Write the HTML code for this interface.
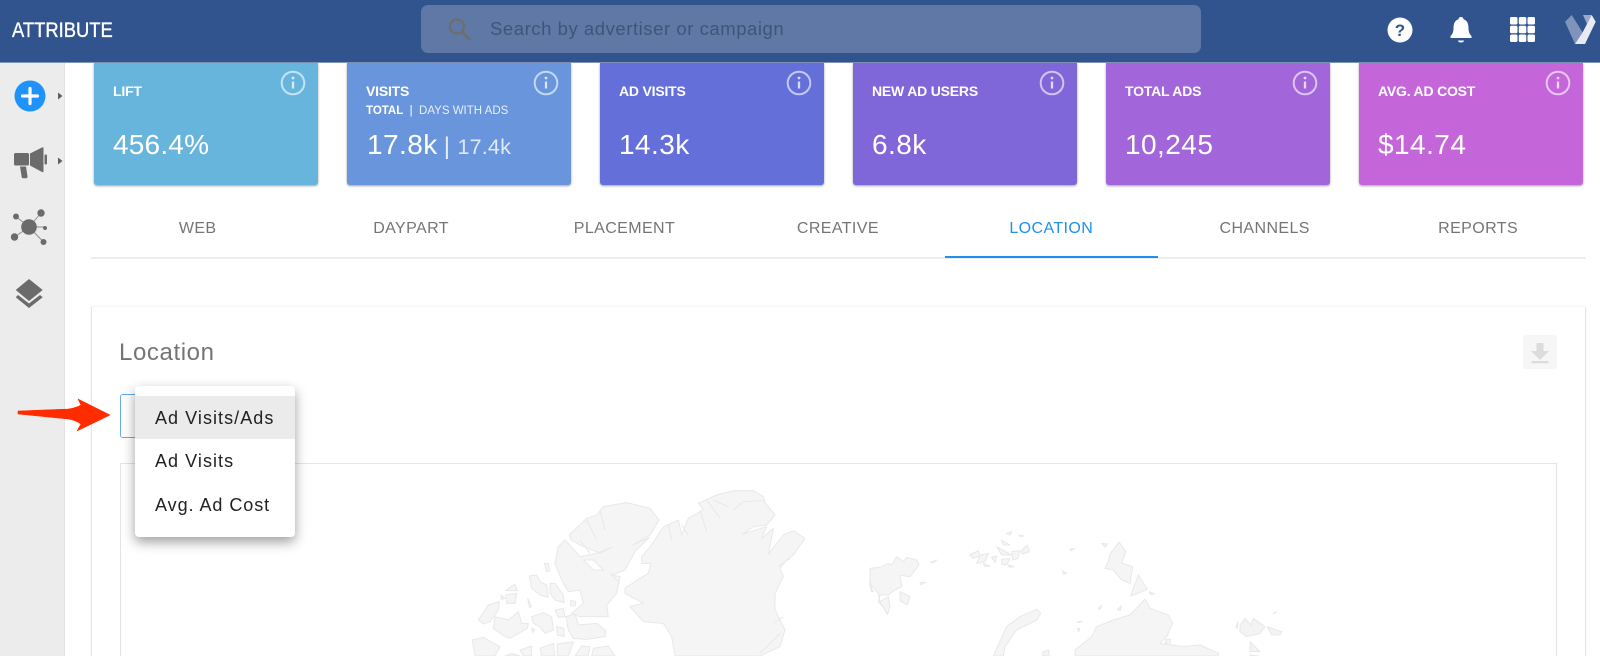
<!DOCTYPE html>
<html><head><meta charset="utf-8"><style>
*{box-sizing:border-box}
html,body{margin:0;padding:0;width:1600px;height:656px;overflow:hidden;background:#fff;font-family:"Liberation Sans",sans-serif}
.a{position:absolute}
.card{position:absolute;top:63px;width:224px;height:122px;border-radius:0 0 3px 3px;box-shadow:0 1px 2px rgba(0,0,0,.38);color:#fff}
.card .t{position:absolute;left:19px;top:20px;font-size:14px;font-weight:bold;line-height:17px;white-space:nowrap;letter-spacing:-.2px}
.card .v{position:absolute;left:19px;top:65px;font-size:28px;line-height:34px;white-space:nowrap;letter-spacing:.45px}
.card svg{position:absolute;left:186px;top:7px}
.tab{position:absolute;top:219px;width:213.4px;text-align:center;font-size:16px;line-height:20px;color:#757575;letter-spacing:.4px}
.mi{position:absolute;left:155px;font-size:18px;line-height:22px;color:#222;letter-spacing:1.05px;white-space:nowrap}
</style></head><body>
<div class="a" style="left:0;top:0;width:1600px;height:63px;background:#31548f;border-bottom:1px solid #7f95ba"></div>
<div class="a" style="left:12px;top:18px;font-size:21px;line-height:26px;color:#fff;transform:scaleX(.875);transform-origin:0 0;white-space:nowrap;-webkit-text-stroke:.35px #fff">ATTRIBUTE</div>
<div class="a" style="left:421px;top:5px;width:780px;height:48px;border-radius:7px;background:#5f78a6"></div>
<svg class="a" style="left:446px;top:16px" width="28" height="28" viewBox="0 0 28 28"><circle cx="11" cy="10.500" r="7" fill="none" stroke="#6b6f70" stroke-width="2.400"/><path d="M16 16l8 8" stroke="#6b6f70" stroke-width="2.800"/></svg>
<div class="a" style="left:490px;top:17px;font-size:18.500px;line-height:24px;color:#3f5479;letter-spacing:.55px;white-space:nowrap">Search by advertiser or campaign</div>
<svg class="a" style="left:1380px;top:10px" width="220" height="40" viewBox="1380 10 220 40">
<circle cx="1400" cy="30" r="12.500" fill="#fff"/>
<text x="1400" y="36" text-anchor="middle" font-family="Liberation Sans" font-weight="bold" font-size="17" fill="#31548f">?</text>
<path d="M1461 17c1.500 0 2.500 1 2.500 2.200 4 1.300 5 5 5 9 0 4 1.200 6 3 7.800v2h-21v-2c1.800-1.800 3-3.800 3-7.800 0-4 1-7.700 5-9 0-1.200 1-2.200 2.500-2.200z" fill="#fff"/>
<path d="M1458 40.500h6c-.3 1.500-1.500 2-3 2s-2.700-.5-3-2z" fill="#fff"/>
<g fill="#fff"><rect x="1510" y="17" width="7.500" height="7.500" rx="1.500"/><rect x="1518.800" y="17" width="7.500" height="7.500" rx="1.500"/><rect x="1527.500" y="17" width="7.500" height="7.500" rx="1.500"/><rect x="1510" y="25.800" width="7.500" height="7.500" rx="1.500"/><rect x="1518.800" y="25.800" width="7.500" height="7.500" rx="1.500"/><rect x="1527.500" y="25.800" width="7.500" height="7.500" rx="1.500"/><rect x="1510" y="34.500" width="7.500" height="7.500" rx="1.500"/><rect x="1518.800" y="34.500" width="7.500" height="7.500" rx="1.500"/><rect x="1527.500" y="34.500" width="7.500" height="7.500" rx="1.500"/></g>
<path d="M1565 21.700L1571.700 15 1583 33 1575 44z" fill="#7f93bb"/>
<path d="M1583 15h8.700l-4.700 9z" fill="#9aaacb"/>
<path d="M1582.300 33L1591.700 15 1595.700 21.700 1585 44H1575z" fill="#e8ebf4"/>
</svg>

<div class="a" style="left:0;top:63px;width:65px;height:593px;background:#ececec;border-right:1px solid #e2e2e2"></div>
<svg class="a" style="left:0;top:63px" width="65" height="260" viewBox="0 63 65 260">
<circle cx="30" cy="96" r="15.500" fill="#1e93fb"/><path d="M30 88.500v15M22.500 96h15" stroke="#fff" stroke-width="3.200" stroke-linecap="round"/>
<path d="M58 92.500l4.500 3.500-4.500 3.500zM58 157.500l4.500 3.500-4.500 3.500z" fill="#5f5f5f"/>
<g fill="#6b6b6b" transform="translate(0 1)"><rect x="14" y="152" width="15" height="12.500" rx="1.500"/><path d="M30 152.500l12-6c1-.5 1.500 0 1.500 1v22.500c0 1-.5 1.500-1.500 1l-12-6.500z"/><rect x="44.500" y="153.500" width="2.500" height="10" rx="1"/><path d="M20 165.500h6l1.500 10c.2 1-.5 1.700-1.500 1.700h-3c-.8 0-1.200-.4-1.300-1.200z"/></g>
<g stroke="#8a8a8a" stroke-width=".9"><path d="M29 227L16 216.500M29 227L41 213M29 227H45M29 227L43.500 242M29 227L14.500 237"/></g>
<g fill="#6b6b6b"><circle cx="29" cy="227" r="7.800"/><circle cx="16" cy="216.500" r="3"/><circle cx="41" cy="213" r="3.700"/><circle cx="45" cy="228" r="2"/><circle cx="43.500" cy="242" r="3"/><circle cx="14.500" cy="237" r="3.700"/>
<g transform="translate(0 1)"><path d="M29 278l13.700 11L29 300 15.700 289z"/><path d="M18 294l11 8.500L40 294l2.700 2.300L29 307 15.700 296.300z"/></g></g>
</svg>

<div class="card" style="left:94px;background:#67b5dc"><div class="t">LIFT</div><div class="v" style="letter-spacing:.2px">456.4%</div><svg width="26" height="26" viewBox="0 0 26 26"><circle cx="13" cy="13" r="11.300" fill="none" stroke="#fff" stroke-opacity=".62" stroke-width="2"/><path d="M13 11.500v7" stroke="#fff" stroke-opacity=".75" stroke-width="2.300"/><circle cx="13" cy="8" r="1.400" fill="#fff" fill-opacity=".75"/></svg></div>
<div class="card" style="left:347px;background:#6895dc"><div class="t">VISITS</div><div class="a" style="left:19px;top:41px;font-size:11.500px;line-height:14px;white-space:nowrap"><b>TOTAL</b>&nbsp; | &nbsp;<span style="opacity:.85">DAYS WITH ADS</span></div><div class="v" style="left:20px">17.8k<span style="font-size:24px;font-weight:normal;opacity:.85;margin:0 7px 0 6px">|</span><span style="font-size:21.500px;opacity:.8;letter-spacing:.2px">17.4k</span></div><svg width="26" height="26" viewBox="0 0 26 26"><circle cx="13" cy="13" r="11.300" fill="none" stroke="#fff" stroke-opacity=".62" stroke-width="2"/><path d="M13 11.500v7" stroke="#fff" stroke-opacity=".75" stroke-width="2.300"/><circle cx="13" cy="8" r="1.400" fill="#fff" fill-opacity=".75"/></svg></div>
<div class="card" style="left:600px;background:#656fd9"><div class="t">AD VISITS</div><div class="v">14.3k</div><svg width="26" height="26" viewBox="0 0 26 26"><circle cx="13" cy="13" r="11.300" fill="none" stroke="#fff" stroke-opacity=".62" stroke-width="2"/><path d="M13 11.500v7" stroke="#fff" stroke-opacity=".75" stroke-width="2.300"/><circle cx="13" cy="8" r="1.400" fill="#fff" fill-opacity=".75"/></svg></div>
<div class="card" style="left:853px;background:#8067d9"><div class="t">NEW AD USERS</div><div class="v">6.8k</div><svg width="26" height="26" viewBox="0 0 26 26"><circle cx="13" cy="13" r="11.300" fill="none" stroke="#fff" stroke-opacity=".62" stroke-width="2"/><path d="M13 11.500v7" stroke="#fff" stroke-opacity=".75" stroke-width="2.300"/><circle cx="13" cy="8" r="1.400" fill="#fff" fill-opacity=".75"/></svg></div>
<div class="card" style="left:1106px;background:#a266da"><div class="t">TOTAL ADS</div><div class="v">10,245</div><svg width="26" height="26" viewBox="0 0 26 26"><circle cx="13" cy="13" r="11.300" fill="none" stroke="#fff" stroke-opacity=".62" stroke-width="2"/><path d="M13 11.500v7" stroke="#fff" stroke-opacity=".75" stroke-width="2.300"/><circle cx="13" cy="8" r="1.400" fill="#fff" fill-opacity=".75"/></svg></div>
<div class="card" style="left:1359px;background:#c466da"><div class="t">AVG. AD COST</div><div class="v">$14.74</div><svg width="26" height="26" viewBox="0 0 26 26"><circle cx="13" cy="13" r="11.300" fill="none" stroke="#fff" stroke-opacity=".62" stroke-width="2"/><path d="M13 11.500v7" stroke="#fff" stroke-opacity=".75" stroke-width="2.300"/><circle cx="13" cy="8" r="1.400" fill="#fff" fill-opacity=".75"/></svg></div>

<div class="tab" style="left:91px">WEB</div>
<div class="tab" style="left:304.400px">DAYPART</div>
<div class="tab" style="left:517.800px">PLACEMENT</div>
<div class="tab" style="left:731.200px">CREATIVE</div>
<div class="tab" style="left:944.600px;color:#1e90f0">LOCATION</div>
<div class="tab" style="left:1158px">CHANNELS</div>
<div class="tab" style="left:1371.400px">REPORTS</div>
<div class="a" style="left:91px;top:257px;width:1495px;height:2px;background:#ececec"></div>
<div class="a" style="left:945px;top:256px;width:213px;height:2px;background:#1e90f0"></div>

<div class="a" style="left:91px;top:307px;width:1495px;height:349px;background:#fff;border-left:1px solid #e6e6e6;border-right:1px solid #e6e6e6;box-shadow:0 -1px 2px rgba(0,0,0,.05)"></div>
<div class="a" style="left:119px;top:338px;font-size:24px;line-height:30px;color:#757575;letter-spacing:.6px">Location</div>
<div class="a" style="left:1523px;top:335px;width:34px;height:34px;border-radius:3px;background:#f6f6f6"></div>
<svg class="a" style="left:1523px;top:335px" width="34" height="34" viewBox="0 0 34 34"><path d="M13.500 8h7v8h5.500l-9 9-9-9h5.500z" fill="#dcdcdc"/><rect x="8.500" y="26" width="17" height="2.200" fill="#dcdcdc"/></svg>
<div class="a" style="left:120px;top:394px;width:60px;height:44px;border:1px solid #64a9f0;border-radius:3px"></div>
<div class="a" style="left:120px;top:463px;width:1437px;height:193px;border:1px solid #e4e4e4;border-bottom:0"></div>

<svg class="a" style="left:0;top:0" width="1600" height="656" viewBox="0 0 1600 656">
<g fill="#f5f5f5" stroke="#e8e8e8" stroke-width="3" stroke-linejoin="round" transform="translate(440 460) scale(.33333)">
<path d="M555 385L600 355 625 340 632 310 605 310 605 290 635 255 660 215 672 200 715 180 725 225 745 175 790 150 775 130 830 105 880 92 940 92 970 110 975 128 1005 165 980 195 940 200 908 222 980 200 965 235 1000 205 985 282 1030 225 1060 212 1095 235 1060 285 1040 300 1020 325 1030 350 1005 400 1005 450 1035 510 1020 560 960 588 705 588 695 530 670 490 610 485 570 440 610 430 555 400z"/>
<path d="M388 225L440 175 470 165 490 140 560 128 590 135 630 145 657 180 630 225 578 255 628 232 585 275 555 330 515 345 540 350 530 400 500 435 505 470 420 470 395 460 430 430 420 390 385 395 365 360 345 310 355 260 375 240 420 290 470 280 515 262 480 280 420 255 395 240z"/>
<path d="M430 300L460 300 490 330 460 330z" fill="#fff"/>
<path d="M313 310L325 310 328 332 320 335z"/>
<path d="M268 348L290 345 300 365 320 375 325 412 300 405 275 385z"/>
<path d="M330 370L345 370 370 405 372 428 345 420 330 400z"/>
<path d="M197 392L225 372 232 392z"/><path d="M183 405L195 415 183 418z"/><path d="M197 405L230 400 225 430 200 430z"/>
<path d="M263 415L275 440 268 442z"/><path d="M392 420L408 425 405 438 392 438z"/>
<path d="M115 480L145 435 178 425 175 450 150 485 130 492z"/>
<path d="M165 470L205 480 235 455 245 490 265 490 262 505 210 535 195 530 160 505z"/>
<path d="M275 470L310 458 335 470 340 510 315 520 300 500 280 490z"/>
<path d="M345 450L370 445 375 470 355 472z"/><path d="M350 500L372 505 372 530 352 525z"/>
<path d="M275 505L285 510 278 518z"/>
<path d="M378 470L405 462 415 495 470 490 497 512 495 530 440 538 400 535 385 510z"/>
<path d="M97 540L130 532 180 560 165 588 105 588z"/>
<path d="M195 588L215 580 240 588z"/><path d="M240 570L275 558 275 588 250 588z"/>
<path d="M300 565L340 550 345 588 305 588z"/><path d="M352 552L400 545 385 588 352 588z"/><path d="M405 588L425 558 450 560 445 588z"/><path d="M460 565L505 558 525 588 455 588z"/>
</g>
<g fill="none" stroke="#e8e8e8" stroke-width="3" transform="translate(440 460) scale(.33333)">
<path d="M880 150L910 125 970 122M800 215L780 150M840 175L800 120M820 120L865 140M1015 320L1050 295M1000 490L1030 470M960 580L1020 520M685 195L695 240M725 195L745 225M480 150L495 210M440 180L470 240M420 240L450 280M510 340L540 370"/>
</g>
<g fill="#f5f5f5" stroke="#e8e8e8" stroke-width="3" stroke-linejoin="round" transform="translate(820 480) scale(.33333)">
<path d="M150 265L180 262 205 250 215 255 230 230 250 245 260 232 290 240 297 255 270 290 240 285 245 320 225 330 205 345 180 345 175 365 205 400 180 365 175 340 150 310z"/>
<path d="M240 335L270 350 262 375 240 362z"/><path d="M180 365L205 350 210 380 202 403z"/>
<path d="M148 310L160 335 155 335z"/><path d="M332 248L350 240 340 248z"/><path d="M300 308L318 306 302 314z"/>
<path d="M448 225L475 212 480 228 460 235z"/><path d="M480 225L505 220 495 245 470 250z"/><path d="M530 200L575 225 545 225z"/><path d="M545 180L570 195 550 195z"/><path d="M575 215L598 212 595 235 578 240z"/><path d="M602 215L622 195 628 215 608 222z"/><path d="M545 238L570 235 560 255 545 252z"/><path d="M515 232L530 228 525 248z"/><path d="M560 160L575 155 570 165z"/><path d="M598 165L612 168 600 170z"/><path d="M490 250L510 258 495 260z"/><path d="M565 255L582 260 568 262z"/>
<path d="M750 208L765 205 752 212z"/><path d="M845 190L862 192 855 202z"/><path d="M727 272L740 280 730 282z"/>
<path d="M870 222L897 186 918 215 905 248 938 260 930 310 905 300 880 270 855 265 865 245z"/>
<path d="M932 348L955 285 982 328z"/><path d="M988 335L1003 342 992 344z"/>
<path d="M520 528L560 440 600 410 650 388 662 400 650 420 590 450 555 500 550 528z"/>
<path d="M765 510L815 470 830 440 880 420 930 405 975 358 990 385 1045 405 1058 430 1040 470 1020 490 1090 500 1140 495 1195 520 1195 528 765 528z"/>
<path d="M1038 478L1052 478 1050 495 1036 490z"/>
<path d="M670 515L685 510 688 528 668 528z"/><path d="M892 388L905 378 900 392z"/><path d="M835 385L845 376 840 388z"/><path d="M772 425L786 425 775 428z"/><path d="M772 445L780 445 776 455z"/>
<path d="M1248 440L1254 425 1252 445z"/>
</g>
<g fill="#f3f3f3" stroke="#e8e8e8" stroke-width="3" stroke-linejoin="round" transform="translate(1240 500) scale(.33333)">
<path d="M0 375L15 355 33 375 40 355 75 380 60 400 20 410 0 395z"/><path d="M82 380L125 395 120 405 95 405z"/><path d="M30 425L60 455 30 455z"/><path d="M100 340L110 335 105 340z"/><path d="M30 465L55 468 30 468z"/>
</g>
</svg>

<svg class="a" style="left:10px;top:390px" width="110" height="50" viewBox="10 390 110 50"><path d="M18 411L68 409Q76 408 81 405L78 399 110 415 77 431 81 424Q75 420 68 419L18 414z" fill="#ff2c00" stroke="#ff2c00" stroke-width=".6" stroke-linejoin="round"/></svg>

<div class="a" style="left:135px;top:386px;width:160px;height:151px;background:#fff;border-radius:4px;box-shadow:0 5px 12px rgba(0,0,0,.38)"></div>
<div class="a" style="left:135px;top:396px;width:160px;height:43px;background:#ebebeb"></div>
<div class="mi" style="top:407px">Ad Visits/Ads</div>
<div class="mi" style="top:450px">Ad Visits</div>
<div class="mi" style="top:494px;letter-spacing:.95px">Avg. Ad Cost</div>
</body></html>
